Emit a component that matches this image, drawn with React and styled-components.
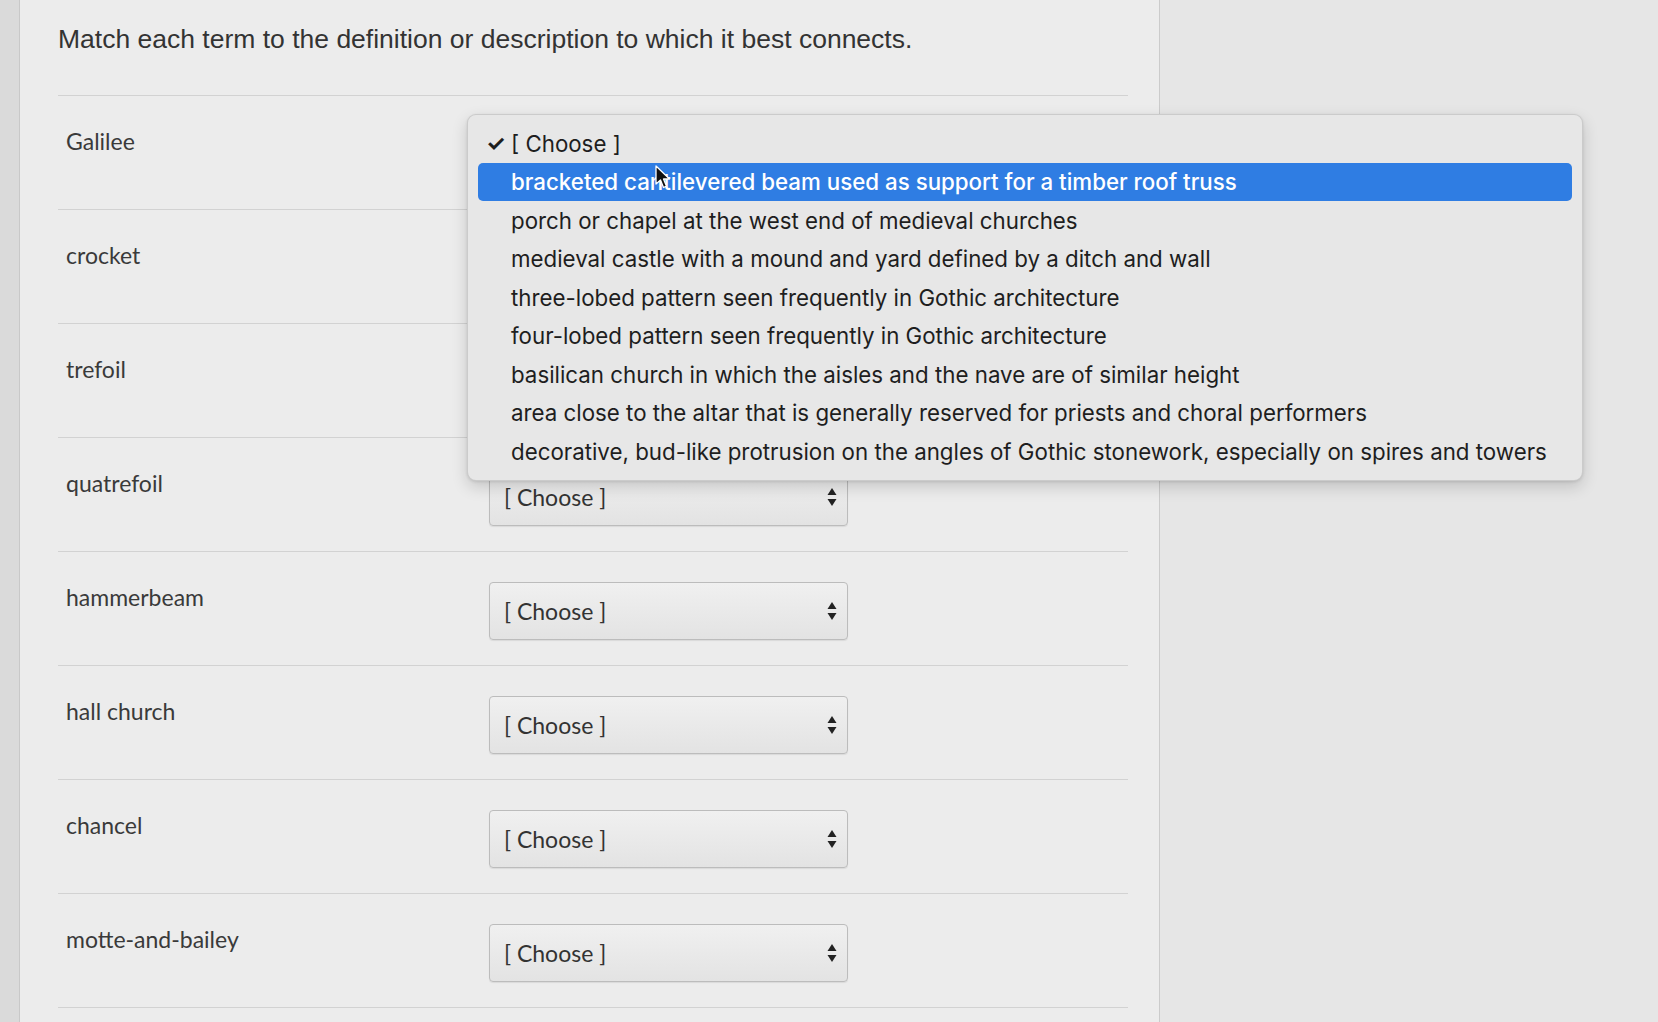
import React from 'react';
import styled, { createGlobalStyle } from 'styled-components';

const GlobalStyle = createGlobalStyle`
  html, body {
    margin: 0;
    padding: 0;
    background: #e6e6e6;
  }
  * { box-sizing: border-box; }
`;

const Page = styled.div`
  position: relative;
  display: flex;
  width: 1658px;
  height: 1022px;
  overflow: hidden;
  background: #e6e6e6;
  font-family: Lato, "Liberation Sans", sans-serif;
  color: #363636;
`;

const Gutter = styled.div`
  width: 20px;
  background: #dadada;
  border-right: 1px solid #c8c8c8;
`;

const Panel = styled.main`
  width: 1140px;
  padding: 23px 31px 0 38px;
  background: #ececec;
  border-right: 1px solid #cbcbcb;
`;

const Title = styled.h1`
  margin: 0 0 40px;
  font-family: "Liberation Sans", Arial, sans-serif;
  font-size: 26.5px;
  line-height: 32px;
  font-weight: 400;
  color: #333;
`;

const List = styled.div`
  border-top: 1px solid #d2d2d2;
`;

const Row = styled.div`
  display: grid;
  grid-template-columns: 423px 359px;
  height: 114px;
  padding-left: 8px;
  border-bottom: 1px solid #d2d2d2;
`;

const Term = styled.div`
  padding-top: 31px;
  font-size: 23px;
  line-height: 28px;
  color: #3a3a3a;
`;

const Select = styled.div`
  display: flex;
  align-items: center;
  justify-content: space-between;
  height: 58px;
  margin-top: 30px;
  padding: 0 10px 0 14px;
  border: 1px solid #bcbcbc;
  border-radius: 4px;
  background: linear-gradient(#f0f0f0, #e3e3e3);
  box-shadow: 0 1px 1px rgba(0, 0, 0, 0.08);
  font-size: 23px;
  color: #333;
`;

const Arrows = () => (
  <svg width="10" height="22" viewBox="0 0 10 22">
    <path d="M5 2 L9.5 9 H0.5 Z" fill="#222" />
    <path d="M5 20 L9.5 13 H0.5 Z" fill="#222" />
  </svg>
);

const Popup = styled.div`
  position: absolute;
  left: 467px;
  top: 114px;
  width: 1116px;
  padding: 9px 10px;
  background: #e7e7e7;
  border: 1px solid rgba(0, 0, 0, 0.12);
  border-radius: 9px;
  box-shadow: 0 6px 16px rgba(0, 0, 0, 0.16), 0 1px 3px rgba(0, 0, 0, 0.1);
  font-family: Inter, "Liberation Sans", sans-serif;
`;

const Option = styled.div`
  position: relative;
  height: 38.5px;
  padding-left: 33px;
  display: flex;
  align-items: center;
  border-radius: 5px;
  font-size: 22.3px;
  color: ${p => (p.$active ? '#fff' : '#1e1e1e')};
  background: ${p => (p.$active ? '#2f7de3' : 'transparent')};
  font-weight: ${p => (p.$active ? 500 : 400)};
`;

const Check = styled.span`
  position: absolute;
  left: 8px;
  font-size: 22px;
  font-weight: 700;
`;

const Cursor = styled.svg`
  position: absolute;
  left: 655px;
  top: 165px;
`;

const terms = [
  'Galilee',
  'crocket',
  'trefoil',
  'quatrefoil',
  'hammerbeam',
  'hall church',
  'chancel',
  'motte-and-bailey',
];

const options = [
  'bracketed cantilevered beam used as support for a timber roof truss',
  'porch or chapel at the west end of medieval churches',
  'medieval castle with a mound and yard defined by a ditch and wall',
  'three-lobed pattern seen frequently in Gothic architecture',
  'four-lobed pattern seen frequently in Gothic architecture',
  'basilican church in which the aisles and the nave are of similar height',
  'area close to the altar that is generally reserved for priests and choral performers',
  'decorative, bud-like protrusion on the angles of Gothic stonework, especially on spires and towers',
];

const App = () => (
  <Page>
    <GlobalStyle />
    <Gutter />
    <Panel>
      <Title>Match each term to the definition or description to which it best connects.</Title>
      <List>
        {terms.map((t, i) => (
          <Row key={t}>
            <Term>{t}</Term>
            {/* the first three selects sit under the open menu */}
            {i > 2 && (
              <Select>
                <span>[ Choose ]</span>
                <Arrows />
              </Select>
            )}
          </Row>
        ))}
      </List>
    </Panel>
    <Popup>
      <Option>
        <Check>✓</Check>[ Choose ]
      </Option>
      {options.map((o, i) => (
        <Option key={o} $active={i === 0}>{o}</Option>
      ))}
    </Popup>
    <Cursor width="17" height="25" viewBox="0 0 17 25">
      <path d="M1 1 L1 19 L5.5 15 L8.5 22.5 L11.5 21.2 L8.5 14 L14.5 14 Z" fill="#111" stroke="#fff" strokeWidth="1.3" strokeLinejoin="round" />
    </Cursor>
  </Page>
);

export default App;
